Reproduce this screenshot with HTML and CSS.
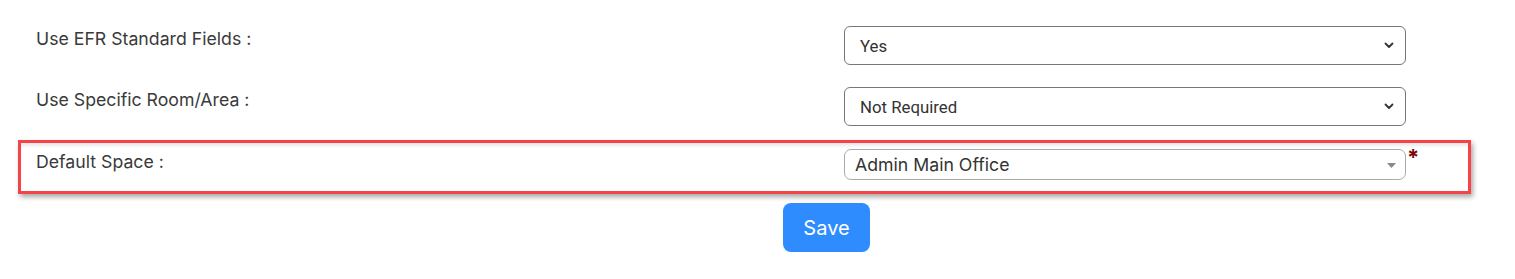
FILE: index.html
```html
<!DOCTYPE html>
<html>
<head>
<meta charset="utf-8">
<link rel="stylesheet" href="styles.css">
</head>
<body>
<div class="form">
  <div class="row row-first">
    <div class="label">Use EFR Standard Fields :</div>
    <div class="field">
      <div class="select">
        <span class="value">Yes</span>
        <svg class="chev" width="10" height="7" viewBox="0 0 10 7"><path d="M1.5 1.5 L5 5 L8.5 1.5" fill="none" stroke="#333" stroke-width="1.8" stroke-linecap="round" stroke-linejoin="round"/></svg>
      </div>
    </div>
  </div>
  <div class="row row-second">
    <div class="label">Use Specific Room/Area :</div>
    <div class="field">
      <div class="select">
        <span class="value">Not Required</span>
        <svg class="chev" width="10" height="7" viewBox="0 0 10 7"><path d="M1.5 1.5 L5 5 L8.5 1.5" fill="none" stroke="#333" stroke-width="1.8" stroke-linecap="round" stroke-linejoin="round"/></svg>
      </div>
    </div>
  </div>
  <div class="row highlight">
    <div class="label">Default Space :</div>
    <div class="field">
      <div class="select select-small">
        <span class="value">Admin Main Office</span>
        <svg class="tri" width="9" height="5" viewBox="0 0 9 5"><path d="M0 0 H9 L4.5 5 Z" fill="#888"/></svg>
      </div>
      <span class="req">*</span>
    </div>
  </div>
  <div class="actions">
    <button class="save">Save</button>
  </div>
</div>
</body>
</html>
```
FILE: styles.css
```css
html, body {
  margin: 0;
  padding: 0;
  background: #ffffff;
}
body {
  font-family: Inter, "Noto Sans", sans-serif;
  color: #333;
}
.form {
  padding-top: 26px;
}
.row {
  display: flex;
  align-items: flex-start;
  padding-left: 36px;
}
.row-second {
  margin-top: 22px;
}
.label {
  width: 808px;
  flex: none;
  font-size: 17.7px;
  line-height: 26px;
  color: #3a3a3a;
}
.field {
  display: flex;
  align-items: flex-start;
}
.select {
  box-sizing: border-box;
  width: 562px;
  height: 39px;
  border: 1px solid #777;
  border-radius: 6px;
  display: flex;
  align-items: center;
  justify-content: space-between;
  padding: 0 11px 0 15px;
  font-family: Roboto, "Liberation Sans", sans-serif;
  font-size: 16.8px;
  color: #333;
  background: #fff;
}
.select-small {
  height: 31px;
  border: 1px solid #aaa;
  border-radius: 7px;
  padding: 0 9px 0 10px;
  font-family: Inter, Roboto, sans-serif;
  font-size: 17.7px;
  color: #333;
}
.value {
  line-height: 22px;
}
.tri {
  margin-top: 1px;
}
.req {
  color: #7a0a0a;
  font-size: 22px;
  font-weight: bold;
  line-height: 16px;
  margin-left: 1px;
  margin-top: 0;
}
.highlight {
  margin: 14px 0 0 18px;
  width: 1453px;
  box-sizing: border-box;
  border: 3px solid #f44448;
  padding: 6px 0 11px 15px;
  box-shadow: 2px 3px 5px rgba(0, 0, 0, 0.35), inset 0 5px 4px -3px rgba(0, 0, 0, 0.12);
}
.actions {
  padding-left: 783px;
  margin-top: 9px;
}
.save {
  width: 87px;
  height: 49px;
  border: none;
  border-radius: 8px;
  background: #2e8cff;
  color: #fff;
  font-family: Inter, "Noto Sans", sans-serif;
  font-size: 20px;
  padding: 0;
}
```
